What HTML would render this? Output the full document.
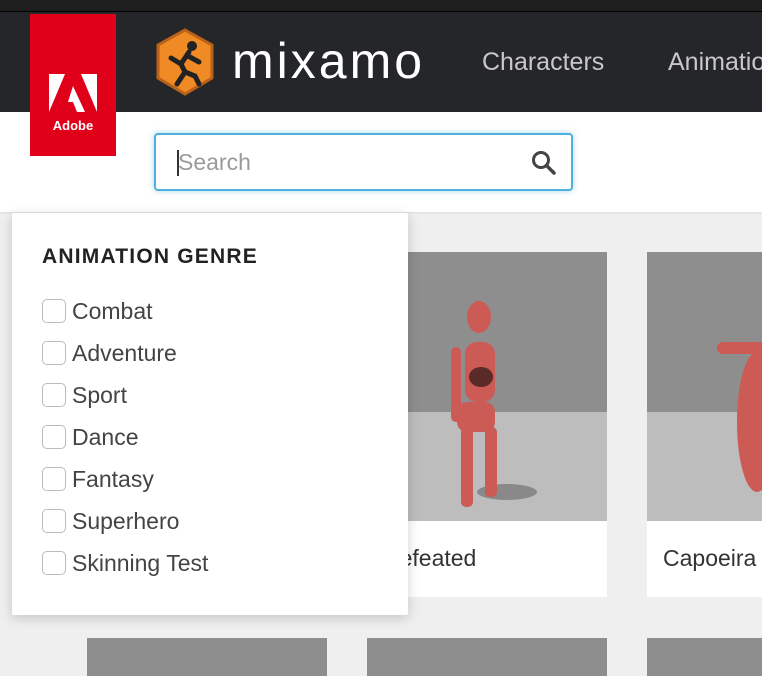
<!DOCTYPE html>
<html><head><style>
*{margin:0;padding:0;box-sizing:border-box}
html,body{width:762px;height:676px;overflow:hidden}
body{background:#efefef;font-family:"Liberation Sans",sans-serif;position:relative}
.top{position:absolute;left:0;top:0;width:762px;height:12px;background:#1e1e1e;border-bottom:1px solid #000}
.hdr{position:absolute;left:0;top:12px;width:762px;height:100px;background:#252629}
.band{position:absolute;left:0;top:112px;width:762px;height:100px;background:#fff;box-shadow:0 1px 2px rgba(0,0,0,.08)}
.adobe{position:absolute;left:30px;top:14px;width:86px;height:142px;background:#e1001a;color:#fff;font-size:13px;font-weight:bold;text-align:center}
.logo{position:absolute;left:155px;top:28px}
.mix{position:absolute;left:232px;top:32px;color:#fff;font-size:50px;letter-spacing:3px}
.nav{position:absolute;top:48px;color:#c8c8c8;font-size:25px}
.search{position:absolute;left:154px;top:133px;width:419px;height:58px;border:2px solid #4fb0dc;border-radius:4px;background:#fff;box-shadow:0 0 6px rgba(79,176,220,.5)}
.search span{position:absolute;left:22px;top:14px;font-size:23px;color:#9a9a9a}
.search .cur{position:absolute;left:21px;top:15px;width:2px;height:26px;background:#333}
.card{position:absolute;width:240px;background:#fff}
.img{height:269px;background:linear-gradient(#8e8e8e 0,#8e8e8e 160px,#bdbdbd 160px)}
.card .t{height:76px;padding:24px 0 0 16px;font-size:23px;color:#333}
.bot{position:absolute;top:638px;width:240px;height:38px;background:#8e8e8e}
.dd{position:absolute;left:12px;top:213px;width:396px;height:402px;background:#fff;box-shadow:0 3px 12px rgba(0,0,0,.18);border-radius:2px}
.dd h3{position:absolute;left:30px;top:32px;font-size:21px;font-weight:bold;color:#222;letter-spacing:1.2px}
.it{position:absolute;left:30px;font-size:23px;color:#444;height:26px;line-height:26px}
.it i{display:inline-block;width:24px;height:24px;border:1px solid #bbb;border-radius:5px;vertical-align:middle;margin-right:6px;margin-top:-4px}
</style></head><body>
<div class="top"></div>
<div class="hdr"></div>
<div class="band"></div>
<div class="adobe">
<svg width="48" height="40" viewBox="0 0 48 40" style="position:absolute;left:19px;top:60px"><path d="M0 0H16L0 38Z M32 0H48V38Z M24 12L36 38H28L24 28H19Z" fill="#fff"/></svg>
<div style="position:absolute;left:0;width:86px;top:104px">Adobe</div>
</div>
<svg class="logo" width="60" height="68" viewBox="0 0 60 68"><polygon points="30,2 57,17 57,50 30,66 3,50 3,17" fill="#f08a24" stroke="#b8621a" stroke-width="3"/><circle cx="37" cy="18" r="5" fill="#222"/><path d="M34 24 L26 36 L16 30 M26 36 L30 44 L22 56 M30 44 L40 48 L44 56 M33 28 L44 34" stroke="#222" stroke-width="5" fill="none" stroke-linecap="round"/></svg>
<div class="mix">mixamo</div>
<div class="nav" style="left:482px">Characters</div>
<div class="nav" style="left:668px">Animations</div>
<div class="search"><div class="cur"></div><span>Search</span>
<svg width="26" height="26" viewBox="0 0 26 26" style="position:absolute;right:14px;top:15px"><circle cx="10" cy="10" r="7.5" stroke="#444" stroke-width="3" fill="none"/><path d="M15.5 15.5L23 23" stroke="#444" stroke-width="3.5" stroke-linecap="round"/></svg></div>
<div class="card" style="left:87px;top:252px"><div class="img"></div><div class="t">Defeated</div></div>
<div class="card" style="left:367px;top:252px"><div class="img">
<svg width="240" height="269"><ellipse cx="140" cy="240" rx="30" ry="8" fill="#666" opacity=".6"/><g fill="#cc5a55"><ellipse cx="112" cy="65" rx="12" ry="16"/><rect x="98" y="90" width="30" height="60" rx="12"/><rect x="90" y="150" width="38" height="30" rx="10"/><rect x="94" y="175" width="12" height="80" rx="5"/><rect x="118" y="175" width="12" height="70" rx="5"/><rect x="84" y="95" width="10" height="75" rx="5"/></g><ellipse cx="114" cy="125" rx="12" ry="10" fill="#5a2a28"/></svg>
</div><div class="t">Defeated</div></div>
<div class="card" style="left:647px;top:252px;width:115px;overflow:hidden"><div class="img">
<svg width="115" height="269"><g fill="#cc5a55"><rect x="70" y="90" width="50" height="12" rx="6"/><ellipse cx="110" cy="170" rx="20" ry="70"/></g></svg>
</div><div class="t">Capoeira</div></div>
<div class="bot" style="left:87px"></div>
<div class="bot" style="left:367px"></div>
<div class="bot" style="left:647px;width:115px"></div>
<div class="dd">
<h3>ANIMATION GENRE</h3>
<div class="it" style="top:85px"><i></i>Combat</div>
<div class="it" style="top:127px"><i></i>Adventure</div>
<div class="it" style="top:169px"><i></i>Sport</div>
<div class="it" style="top:211px"><i></i>Dance</div>
<div class="it" style="top:253px"><i></i>Fantasy</div>
<div class="it" style="top:295px"><i></i>Superhero</div>
<div class="it" style="top:337px"><i></i>Skinning Test</div>
</div>
</body></html>
